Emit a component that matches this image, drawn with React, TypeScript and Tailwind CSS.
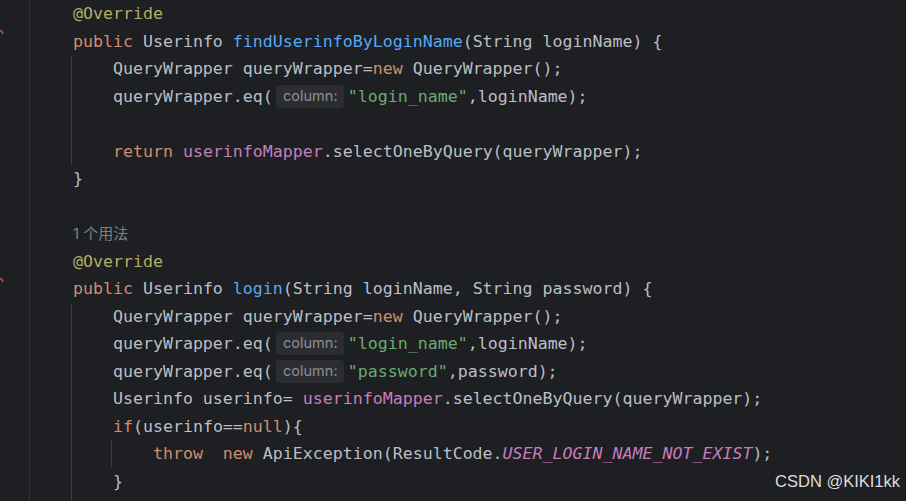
import React from 'react';

type Tok = [string, string?];

const C = {
  txt: 'text-[#bcbec4]',
  kw: 'text-[#cf8e6d]',
  ann: 'text-[#b3ae60]',
  fn: 'text-[#56a8f5]',
  fld: 'text-[#c77dbb]',
  str: 'text-[#6aab73]',
  cst: 'text-[#c77dbb] italic',
};

function Hint() {
  return (
    <span className="mx-[3.5px] inline-flex h-[23px] w-[68px] items-center justify-center rounded-[4px] bg-[#2b2d30] align-middle font-['Inter',sans-serif] text-[14.5px] leading-none text-[#8c8f95] -translate-y-[1px]">
      column:
    </span>
  );
}

function Line({ toks, hintAt }: { toks: Tok[]; hintAt?: number }) {
  return (
    <div className="h-[27.5px] whitespace-pre pl-px leading-[27.5px]">
      {toks.map((t, i) => (
        <React.Fragment key={i}>
          {hintAt === i && <Hint />}
          <span className={t[1] ?? C.txt}>{t[0]}</span>
        </React.Fragment>
      ))}
    </div>
  );
}

function Block({ children }: { children: React.ReactNode }) {
  return <div className="-ml-px border-l border-[#393b40]">{children}</div>;
}

export default function App() {
  return (
    <div className="relative flex h-[501px] w-full overflow-hidden bg-[#1e1f22]">
      {/* gutter */}
      <div className="relative w-[30px] shrink-0 border-r border-[#313438]">
        <svg className="absolute left-0 top-[29px]" width="6" height="8" viewBox="0 0 6 8">
          <path d="M0 1.5 Q2.5 2 3 5" fill="none" stroke="#c94f4f" strokeWidth="1.3" />
        </svg>
        <svg className="absolute left-0 top-[277px]" width="6" height="8" viewBox="0 0 6 8">
          <path d="M0 1.5 Q2.5 2 3 5" fill="none" stroke="#c94f4f" strokeWidth="1.3" />
        </svg>
      </div>

      <div className="pl-[42px] font-['DejaVu_Sans_Mono',monospace] text-[16.6px]">
        <Line toks={[['@Override', C.ann]]} />
        <Line toks={[['public ', C.kw], ['Userinfo '], ['findUserinfoByLoginName', C.fn], ['(String loginName) {']]} />
        <Block>
          <Line toks={[['    QueryWrapper queryWrapper='], ['new ', C.kw], ['QueryWrapper();']]} />
          <Line toks={[['    queryWrapper.eq('], ['"login_name"', C.str], [',loginName);']]} hintAt={1} />
          <Line toks={[['']]} />
          <Line toks={[['    '], ['return ', C.kw], ['userinfoMapper', C.fld], ['.selectOneByQuery(queryWrapper);']]} />
        </Block>
        <Line toks={[['}']]} />
        <Line toks={[['']]} />
        <div className="h-[27.5px] whitespace-pre pl-px font-['Inter','Noto_Sans_CJK_SC',sans-serif] text-[15px] leading-[27.5px] text-[#7e8288]">
          1 个用法
        </div>
        <Line toks={[['@Override', C.ann]]} />
        <Line toks={[['public ', C.kw], ['Userinfo '], ['login', C.fn], ['(String loginName, String password) {']]} />
        <Block>
          <Line toks={[['    QueryWrapper queryWrapper='], ['new ', C.kw], ['QueryWrapper();']]} />
          <Line toks={[['    queryWrapper.eq('], ['"login_name"', C.str], [',loginName);']]} hintAt={1} />
          <Line toks={[['    queryWrapper.eq('], ['"password"', C.str], [',password);']]} hintAt={1} />
          <Line toks={[['    Userinfo userinfo= '], ['userinfoMapper', C.fld], ['.selectOneByQuery(queryWrapper);']]} />
          <Line toks={[['    '], ['if', C.kw], ['(userinfo=='], ['null', C.kw], ['){']]} />
          <div className="ml-[4ch]">
            <Block>
              <Line toks={[['    '], ['throw  new ', C.kw], ['ApiException(ResultCode.'], ['USER_LOGIN_NAME_NOT_EXIST', C.cst], [');']]} />
            </Block>
          </div>
          <Line toks={[['    }']]} />
          <Line toks={[['    '], ['return ', C.kw], ['userinfo;']]} />
        </Block>
      </div>

      <div className="absolute bottom-[7px] right-[6px] font-['Liberation_Sans',sans-serif] text-[16.5px] text-[#dedede]">
        CSDN @KIKI1kk
      </div>
    </div>
  );
}
